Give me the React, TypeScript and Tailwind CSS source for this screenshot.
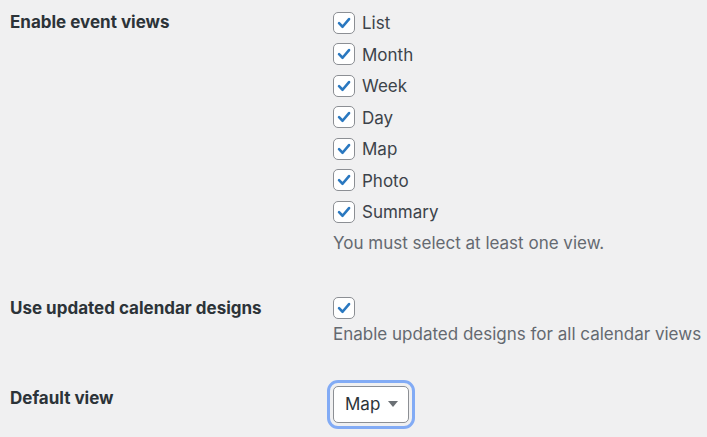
import React from 'react';

const views = ['List', 'Month', 'Week', 'Day', 'Map', 'Photo', 'Summary'];

function Checkbox() {
  return (
    <span className="flex h-[22px] w-[22px] shrink-0 items-center justify-center rounded-[5px] border border-[#8c8f94] bg-white">
      <svg viewBox="0 0 20 20" className="h-[18px] w-[18px]">
        <path d="M4.5 10.2 L8.4 14.2 L15.6 5.6" fill="none" stroke="#2a78c0" strokeWidth="2.9" strokeLinecap="round" strokeLinejoin="round" />
      </svg>
    </span>
  );
}

export default function App() {
  return (
    <div className="h-[437px] w-[707px] overflow-hidden bg-[#f0f0f1] font-['Inter',sans-serif] text-[17px] text-[#3c434a]">
      {/* Enable event views */}
      <div className="flex pt-[7px]">
        <div className="w-[333px] pl-[10px] leading-[31.5px] font-bold text-[#2c3338]">Enable event views</div>
        <div className="flex flex-col">
          {views.map((v) => (
            <label key={v} className="flex h-[31.5px] items-center gap-[7px]">
              <Checkbox />
              <span className="pt-[2px]">{v}</span>
            </label>
          ))}
          <p className="mt-[3px] leading-[24px] text-[#646970]">You must select at least one view.</p>
        </div>
      </div>

      {/* Updated designs */}
      <div className="mt-[42px] flex">
        <div className="w-[333px] pl-[10px] leading-[22px] font-bold text-[#2c3338]">Use updated calendar designs</div>
        <div className="flex flex-col">
          <Checkbox />
          <p className="mt-[3px] leading-[24px] text-[#646970]">Enable updated designs for all calendar views</p>
        </div>
      </div>

      {/* Default view */}
      <div className="mt-[40px] flex">
        <div className="w-[333px] pl-[10px] leading-[24px] font-bold text-[#2c3338]">Default view</div>
        <div className="flex h-[37px] w-[76px] items-center justify-between rounded-[5px] border border-[#8c8f94] bg-white pl-[11px] pr-[10px] pt-[2px] text-[#2c3338] outline-[3px] outline-[#82abf5] outline-offset-[3px] outline-solid">
          <span>Map</span>
          <svg viewBox="0 0 10 6" className="mb-[2px] h-[6px] w-[10px]">
            <path d="M0 0 L10 0 L5 6 Z" fill="#6b7075" />
          </svg>
        </div>
      </div>
    </div>
  );
}
